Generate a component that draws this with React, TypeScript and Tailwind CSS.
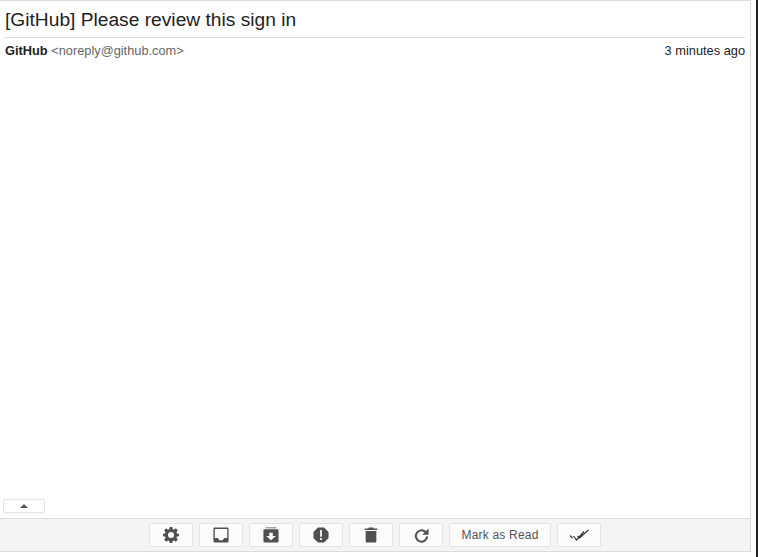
import React from "react";

const sans = "[font-family:'Liberation_Sans',Arial,sans-serif]";

function Btn({ children, w = "w-11" }: { children: React.ReactNode; w?: string }) {
  return (
    <div className={`${w} h-6 flex items-center justify-center bg-[#fbfbfb] border border-[#e4e4e4] rounded-[2px]`}>
      {children}
    </div>
  );
}

const ic = "w-[16px] h-[16px] text-[#505050]";

export default function App() {
  return (
    <div className={`w-[758px] h-[557px] flex bg-white overflow-hidden ${sans}`}>
      <div className="w-[751px] h-[552px] flex flex-col border-t border-r border-[#dcdcdc] shrink-0">
        <div className="mx-[5px] h-[37px] border-b border-[#dcdcdc] text-[19.2px] leading-[38px] text-[#222]">
          [GitHub] Please review this sign in
        </div>
        <div className="mx-[5px] mt-[5px] flex justify-between text-[12.8px] leading-[16px]">
          <div>
            <span className="font-bold text-[#222]">GitHub</span>{" "}
            <span className="text-[#666]">&lt;noreply@github.com&gt;</span>
          </div>
          <div className="text-[#222]">3 minutes ago</div>
        </div>
        <div className="flex-1 flex flex-col justify-end pl-[3px] pb-[5px]">
          <div className="w-[42px] h-[14px] flex items-center justify-center bg-white border border-[#e4e4e4] rounded-[2px]">
            <svg viewBox="0 0 8 4" className="w-2 h-1 text-[#555]"><path d="M4 0 8 4H0z" fill="currentColor" /></svg>
          </div>
        </div>
        <div className="h-[34px] flex items-center justify-center gap-[6px] bg-[#f4f4f4] border-y border-[#dcdcdc]">
          <Btn>
            <svg viewBox="0 0 24 24" className={ic} fill="currentColor">
              <path fillRule="evenodd" d="M10 0h4l.6 3.200 1.900.8L19.200 2l3 3-2 2.800.8 1.900L24 10v4l-3 .4-.8 1.900 2 2.800-3 3-2.700-2-1.900.8L14 24h-4l-.6-3.100-1.900-.8-2.700 2-3-3 2-2.800-.8-1.900L0 14v-4l3-.3.8-1.900-2-2.800 3-3L7.500 4l1.900-.8zM12 7.500a4.500 4.500 0 1 0 0 9 4.500 4.500 0 0 0 0-9z" />
            </svg>
          </Btn>
          <Btn>
            <svg viewBox="0 0 18 18" className={ic} fill="currentColor">
              <path fillRule="evenodd" d="M2 .5h14A1.500 1.500 0 0 1 17.500 2v14a1.500 1.500 0 0 1-1.500 1.500H2A1.500 1.500 0 0 1 .5 16V2A1.500 1.500 0 0 1 2 .5zm0 1.800V12.500h3.500L7 15h4l1.500-2.500H16V2.300z" />
            </svg>
          </Btn>
          <Btn>
            <svg viewBox="0 0 18 18" className={ic} fill="currentColor">
              <path fillRule="evenodd" d="M3 .5h12v1H3zM2 2.500h14A1.500 1.500 0 0 1 17.500 4v12a1.500 1.500 0 0 1-1.500 1.500H2A1.500 1.500 0 0 1 .5 16V4A1.500 1.500 0 0 1 2 2.500zm5 4v3.500H3.500L9 15l5.500-5H11V6.500z" />
            </svg>
          </Btn>
          <Btn>
            <svg viewBox="0 0 18 18" className={ic} fill="currentColor">
              <path fillRule="evenodd" d="M5.500 .5h7l5 5v7l-5 5h-7l-5-5v-7zM8 3.500v7.500h2V3.500zm0 9v2h2v-2z" />
            </svg>
          </Btn>
          <Btn>
            <svg viewBox="0 0 18 18" className={ic} fill="currentColor">
              <path d="M6.500.5h5l.7 1.200H16V3.500H2V1.700h3.800zM3 4.500h12V16a1.500 1.500 0 0 1-1.500 1.500h-9A1.500 1.500 0 0 1 3 16z" />
            </svg>
          </Btn>
          <Btn>
            <svg viewBox="0 0 18 18" className="w-[15px] h-[15px] text-[#505050]" fill="none" stroke="currentColor" strokeWidth="2.400">
              <path d="M14 5A6.800 6.800 0 1 0 15.800 10" />
              <path d="M17.500 .5v7.500h-7.500z" fill="currentColor" stroke="none" />
            </svg>
          </Btn>
          <Btn w="w-[102px]">
            <span className="text-[12px] tracking-[0.2px] text-[#555]">Mark as Read</span>
          </Btn>
          <Btn>
            <svg viewBox="0 0 20 13" className="w-5 h-[13px] text-[#333]" fill="none" stroke="currentColor" strokeWidth="1.200">
              <path d="M1 6.500 3.500 9M4.500 7 7.500 11 15 2.500M8.500 7 10.500 9 19.500 1" />
            </svg>
          </Btn>
        </div>
      </div>
      <div className="w-[5px] shrink-0" />
      <div className="w-[2px] h-full bg-[#222] shrink-0" />
    </div>
  );
}
